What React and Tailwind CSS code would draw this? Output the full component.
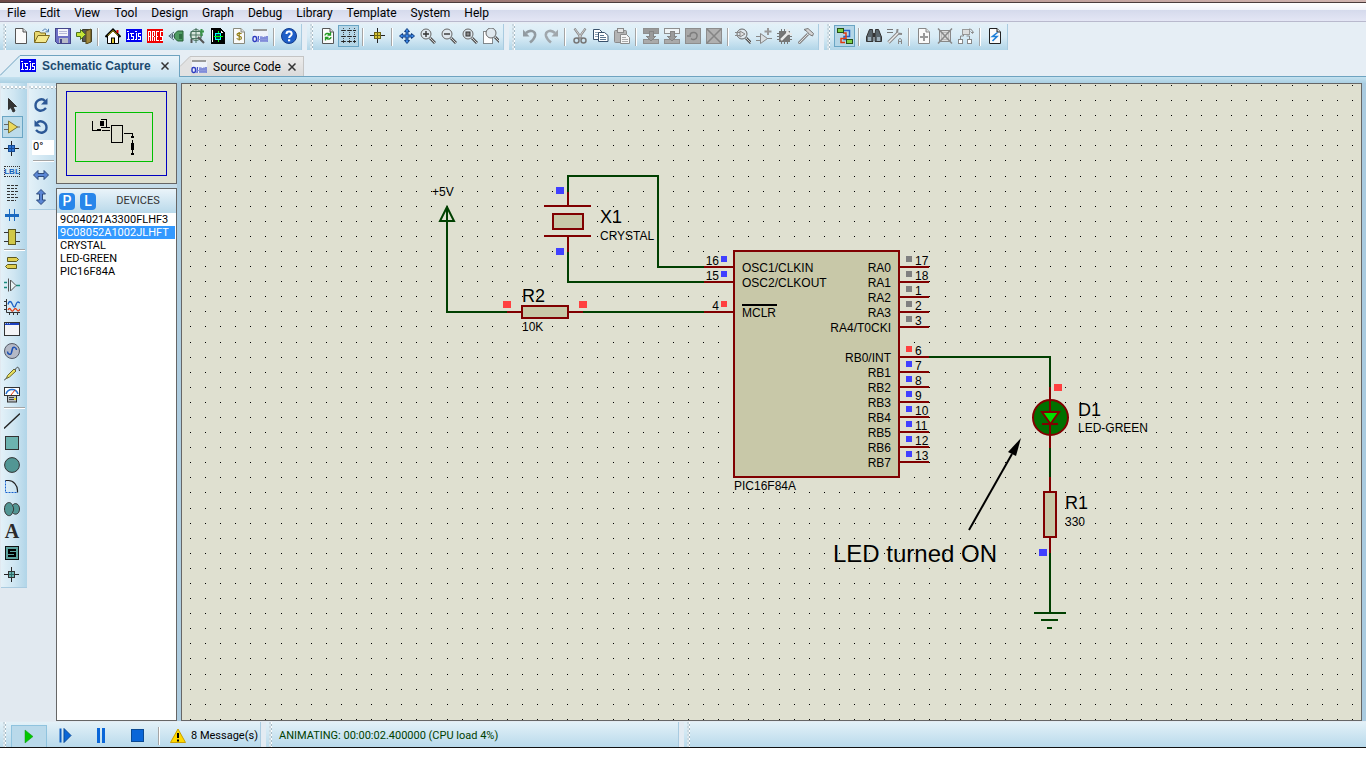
import React from 'react';
import clsx from 'clsx';

const menus = ['File', 'Edit', 'View', 'Tool', 'Design', 'Graph', 'Debug', 'Library', 'Template', 'System', 'Help'];

const Icon = ({ children, crisp, size = 16 }) => (
  <svg
    width={size}
    height={size}
    viewBox="0 0 16 16"
    fill="none"
    shapeRendering={crisp ? 'crispEdges' : undefined}
    className="shrink-0"
    aria-hidden="true"
  >
    {children}
  </svg>
);

const Page = ({ children, stroke = '#555' }) => (
  <Icon>
    <path d="M2.5 .5h7.500l3.500 3.500v11.500h-11z" fill="#fafafa" stroke={stroke} />
    <path d="M10 .5v3.500h3.500" stroke={stroke} fill="#ddd" />
    {children}
  </Icon>
);

const IsisLogo = () => (
  <Icon crisp>
    <rect y="1" width="16" height="13" fill="#0000f0" />
    <path
      d="M1 3.500h2M2.500 5v7M1 11.500h3M4 5.500h4M5.500 5v4M5 8.500h3M7.500 8v4M5 11.500h3M9 3.500h2M10.500 5v7M9 11.500h2M12 5.500h3M12.500 5v4M12 8.500h3M14.500 8v4M12 11.500h3"
      stroke="#fff"
    />
  </Icon>
);

const AresLogo = () => (
  <Icon crisp>
    <rect y="1" width="16" height="14" fill="#f00000" />
    <path
      d="M1.500 13V3M1 3.500h3M3.500 3v10M1 8.500h3M5.500 13V3M5 3.500h3M7.500 3v5M5 8.500h2M7.500 9v4M9.500 3v10M9 3.500h3M9 8.500h2M9 12.500h3M13 3.500h3M13.500 3v5M13 8.500h3M15.500 8v5M13 12.500h3"
      stroke="#fff"
    />
  </Icon>
);

const CodeIcon = () => (
  <Icon>
    <rect x="1" y="2" width="15" height="12" fill="#eef2fa" />
    <rect x="1" y="1" width="14" height="2" fill="#9a9a9a" />
    <rect x="1" y="8.500" width="3.500" height="5" rx="1.500" stroke="#2d3cc0" strokeWidth="1.400" />
    <path d="M6.500 8l-.5 6M9 8.500v5M11 9v4.500M13 8.500v5M15 8v6" stroke="#4554c8" strokeWidth="1.300" />
    <path d="M6.500 11.500h8.500M8 9h3M8 13.500h7" stroke="#8d98dc" />
  </Icon>
);

const Lens = ({ children, x = 6, y = 6 }) => (
  <g>
    <path d={`M${x + 4} ${y + 4}l5 5`} stroke="#555" strokeWidth="3" />
    <path d={`M${x + 4} ${y + 4}l5 5`} stroke="#ccc" strokeWidth="1" />
    <circle cx={x} cy={y} r="5" fill="#dfe8ee" stroke="#666" />
    {children}
  </g>
);

const fileTools = [
  { label: 'New', icon: <Page /> },
  {
    label: 'Open',
    icon: (
      <Icon>
        <path d="M.5 14V4.500l1-1h4l1 1.500h5V8" fill="#e8d870" stroke="#7c6a20" />
        <path d="M.5 14.500L4 7.500h11.500l-3.500 7z" fill="#f4e88c" stroke="#7c6a20" />
        <path d="M8.500 3c2-3 4-2 5 0M14.500 .8v3h-3" stroke="#4f7db0" />
      </Icon>
    ),
  },
  {
    label: 'Save',
    icon: (
      <Icon crisp>
        <path d="M.5 .5h15v15h-13l-2-2z" fill="#6d6fc4" stroke="#44468a" />
        <rect x="3" y="1" width="10" height="7" fill="#f4f4fa" />
        <path d="M4 3.500h8M4 5.500h8" stroke="#b7b8d8" />
        <rect x="4" y="10" width="9" height="5" fill="#b9bbc8" />
        <rect x="5" y="11" width="2" height="4" fill="#44468a" />
      </Icon>
    ),
  },
  {
    label: 'Import',
    icon: (
      <Icon>
        <path d="M6.500 1.500h9v12h-9z" fill="#555" stroke="#3c3c2c" />
        <path d="M10 3l5-2v13l-5 2z" fill="#a18a3b" stroke="#56491c" />
        <path d="M.5 4.500h4v-3l5 5-5 5v-3h-4z" fill="#c4e538" stroke="#4c7420" />
      </Icon>
    ),
  },
  'sep',
  {
    label: 'Home',
    icon: (
      <Icon>
        <path d="M2.500 8v7.500h11V8L8 3z" fill="#fff" stroke="#000" />
        <path d="M.5 9L8 1.500 15.500 9" stroke="#000" strokeWidth="2" />
        <path d="M3 7.500l5-5 5 5" stroke="#e8d020" strokeWidth="1" />
        <path d="M12.500 2v3" stroke="#d00" strokeWidth="2" />
        <rect x="6.500" y="10" width="3" height="5.500" fill="#e0c830" stroke="#000" />
      </Icon>
    ),
  },
  { label: 'Schematic Capture', icon: <IsisLogo /> },
  { label: 'PCB Layout', icon: <AresLogo /> },
  {
    label: '3D Visualizer',
    icon: (
      <Icon>
        <path d="M6.500 6l3-3h5.500v10h-5.500l-3-3z" fill="#4e9c62" stroke="#245c34" />
        <path d="M11 6h3v5h-3z" fill="#2d6f41" />
        <path d="M6 4L.8 8 6 12M2 8h5M4.500 6v4" stroke="#4f6875" />
      </Icon>
    ),
  },
  {
    label: 'Gerber Viewer',
    icon: (
      <Icon>
        <circle cx="7" cy="7" r="5.500" fill="#d7e6dd" stroke="#4a7360" />
        <path d="M7 0v15M.500 7H14M2 3.500h10v7H2z" stroke="#4a7360" />
        <path d="M12.500 1v7M11 3.500h4" stroke="#3a9448" strokeWidth="2" />
        <path d="M2.500 11v4M9 9l6 6" stroke="#555" strokeWidth="2" />
      </Icon>
    ),
  },
  {
    label: 'Design Explorer',
    icon: (
      <Icon crisp>
        <path d="M1.500 .5h9l4 4v11h-13z" fill="#000" stroke="#000" />
        <path d="M2.500 2v12" stroke="#fff" />
        <path d="M10 1v4h4z" fill="#fff" stroke="#000" />
        <rect x="5.500" y="5.500" width="5" height="6" fill="#044" stroke="#0ff" />
        <path d="M8.500 3v2M8.500 12v2M4 8.500h9" stroke="#0f0" />
      </Icon>
    ),
  },
  {
    label: 'Bill of Materials',
    icon: (
      <Page stroke="#8a8a7c">
        <path d="M10.500 6c-1-1.500-4.500-1.200-4.500.6 0 2 4.500 1.200 4.500 3.300 0 2-3.800 2-4.800.4M8.200 4v8.500" stroke="#948019" strokeWidth="1.200" />
      </Page>
    ),
  },
  { label: 'Source Code', icon: <CodeIcon /> },
  'sep',
  {
    label: 'Help',
    icon: (
      <Icon>
        <circle cx="8" cy="8" r="7.500" fill="#1f5fc8" stroke="#123c8c" />
        <path d="M5.500 6c0-3.200 5.200-3.200 5.200 0 0 1.900-2.600 1.800-2.600 4" stroke="#fff" strokeWidth="2" />
        <rect x="7" y="11.300" width="2.200" height="2" fill="#fff" />
      </Icon>
    ),
  },
];

const viewTools = [
  {
    label: 'Redraw',
    icon: (
      <Page>
        <path d="M5 7.500c0-2 3-3 5-1M10.500 4v3h-3M11 9c0 2-3 3-5 1M5.500 12.500v-3h3" stroke="#239b23" strokeWidth="1.300" />
      </Page>
    ),
  },
  {
    label: 'Toggle Grid',
    active: true,
    icon: (
      <Icon crisp>
        <path
          d="M0 2.500h16M0 8.500h16M0 13.500h16M2.500 0v16M8.500 0v16M13.500 0v16"
          stroke="#444"
          strokeDasharray="1 1"
        />
        <path d="M1 2.500h3M7 2.500h3M12 2.500h3M1 8.500h3M7 8.500h3M12 8.500h3M1 13.500h3M7 13.500h3M12 13.500h3" stroke="#222" />
      </Icon>
    ),
  },
  'sep',
  {
    label: 'Origin',
    icon: (
      <Icon crisp>
        <path d="M7.500 0v15M0 7.500h15" stroke="#222" />
        <rect x="4.500" y="4.500" width="6" height="6" fill="#d8c838" stroke="#6e6414" />
        <path d="M7.500 5v5M5 7.500h5" stroke="#6e6414" />
      </Icon>
    ),
  },
  'sep',
  {
    label: 'Pan',
    icon: (
      <Icon>
        <path
          d="M8 .5l2.500 3H9v3.500h3.500V5.500l3 2.500-3 2.500V9H9v3.500h1.500L8 15.500l-2.500-3H7V9H3.500v1.500L.5 8l3-2.500V7H7V3.500H5.500z"
          fill="#3a86e4"
          stroke="#123f80"
        />
      </Icon>
    ),
  },
  { label: 'Zoom In', icon: <Icon><Lens><path d="M3 6h6M6 3v6" stroke="#333" strokeWidth="1.400" /></Lens></Icon> },
  { label: 'Zoom Out', icon: <Icon><Lens><path d="M3 6h6" stroke="#333" strokeWidth="1.400" /></Lens></Icon> },
  { label: 'Zoom All', icon: <Icon><Lens><rect x="4" y="4" width="4" height="4" fill="#888" stroke="#333" /></Lens></Icon> },
  {
    label: 'Zoom Area',
    icon: (
      <Icon>
        <path d="M.5 3.500h9v12h-9z" fill="#fff" stroke="#222" strokeDasharray="1 1" />
        <Lens x={8} y={5} />
      </Icon>
    ),
  },
];

const Download = ({ light }) => (
  <Icon crisp>
    <rect x=".5" y=".5" width="15" height="5" fill={light ? '#eef3f5' : '#999'} stroke="#8f8f8f" />
    <rect x=".5" y="11.500" width="15" height="4" fill="#aaa" stroke="#8f8f8f" />
    <path d="M6 3h4v5h3l-5 5-5-5h3z" fill="#9a9a9a" stroke="#858585" />
  </Icon>
);

const editTools = [
  {
    label: 'Undo',
    icon: (
      <Icon>
        <path d="M4 5c4-4 10-2 9 3-.6 2.500-2.500 4.500-5 6.500" stroke="#929ba1" strokeWidth="2.600" />
        <path d="M1 1.500v7h6.500z" fill="#929ba1" />
      </Icon>
    ),
  },
  {
    label: 'Redo',
    icon: (
      <Icon>
        <path d="M12 5C8 1 2 3 3 8c.6 2.500 2.500 4.500 5 6.500" stroke="#a0a7ac" strokeWidth="2.600" />
        <path d="M15 1.500v7H8.500z" fill="#a0a7ac" />
      </Icon>
    ),
  },
  'sep',
  {
    label: 'Cut',
    icon: (
      <Icon>
        <path d="M2.500 .5L10 11M13.500 .5L6 11" stroke="#888" strokeWidth="2.200" />
        <path d="M3 1l6 8.500M13 1L7 9.500" stroke="#ddd" strokeWidth=".8" />
        <circle cx="4.500" cy="12.500" r="2.500" stroke="#777" strokeWidth="1.500" />
        <circle cx="11.500" cy="12.500" r="2.500" stroke="#777" strokeWidth="1.500" />
      </Icon>
    ),
  },
  {
    label: 'Copy',
    icon: (
      <Icon>
        <path d="M.5 1.500h6l3 3v7h-9z" fill="#fff" stroke="#39516b" />
        <path d="M2 4.500h5M2 6.500h5M2 8.500h5" stroke="#8da0b4" />
        <path d="M5.500 4.500h6l3.500 3v6h-9.500z" fill="#fff" stroke="#39516b" />
        <path d="M7 7.500h4M7 9.500h6M7 11.500h6" stroke="#5c7690" />
      </Icon>
    ),
  },
  {
    label: 'Paste',
    icon: (
      <Icon>
        <rect x=".5" y="2.500" width="12" height="12" rx="1" fill="#b4b4b4" stroke="#8a8a8a" />
        <rect x="3.500" y=".5" width="6" height="4" fill="#e4e4e4" stroke="#8a8a8a" />
        <path d="M6.500 6.500h6l3 3v6h-9z" fill="#f5f5f5" stroke="#8a8a8a" />
        <path d="M8 9.500h4M8 11.500h6M8 13.500h6" stroke="#aaa" />
      </Icon>
    ),
  },
  'sep',
  { label: 'Block Copy', icon: <Download /> },
  { label: 'Block Move', icon: <Download light /> },
  {
    label: 'Block Rotate',
    icon: (
      <Icon>
        <rect x=".5" y=".5" width="15" height="15" fill="#a8a8a8" stroke="#8d8d8d" />
        <path d="M2 8h4M5 7c1-4 8-3 7 1.500-.500 3-4 4-6 2" stroke="#7d7d7d" strokeWidth="1.500" />
      </Icon>
    ),
  },
  {
    label: 'Block Delete',
    icon: (
      <Icon>
        <rect x=".5" y=".5" width="15" height="15" fill="#b0b0b0" stroke="#8d8d8d" />
        <path d="M1 1l14 14M15 1L1 15" stroke="#858585" strokeWidth="1.500" />
      </Icon>
    ),
  },
  'sep',
  { label: 'Pick Parts', icon: <Icon><Lens x={7} y={6}><path d="M5 3v6l5-3zM0 4.500h5M0 7.500h5" fill="#ddd" stroke="#888" /></Lens></Icon> },
  {
    label: 'Make Device',
    icon: (
      <Icon>
        <path d="M4.500 5.500v10l7-5zM0 8.500h4M0 12.500h4M11 10.500h5" fill="#d9dfe2" stroke="#888" />
        <path d="M12 0v7M8.500 3.500h7" stroke="#999" strokeWidth="2" />
      </Icon>
    ),
  },
  {
    label: 'Packaging Tool',
    icon: (
      <Icon>
        <rect x="2" y="3" width="11" height="11" fill="#777" />
        <path d="M0 5.500h15M0 8.500h15M0 11.500h15M4.500 1v15M7.500 1v15M10.500 1v15" stroke="#777" />
        <path d="M4 12l7-7" stroke="#666" strokeWidth="4" />
        <path d="M4 12l8-8" stroke="#e8e8e8" strokeWidth="2.500" />
        <path d="M10.500 1l-.5 4.500 5 .5" stroke="#e8e8e8" strokeWidth="2" />
      </Icon>
    ),
  },
  {
    label: 'Decompose',
    icon: (
      <Icon>
        <path d="M.5 15.500L10 6" stroke="#888" strokeWidth="3" />
        <path d="M1 15l9-9" stroke="#ddd" />
        <path d="M6 1.500l4-1 5.500 5-1 2.500-3-1.500-2.500-3z" fill="#d4d4d4" stroke="#777" />
      </Icon>
    ),
  },
];

const designTools = [
  {
    label: 'Wire Autorouter',
    active: true,
    icon: (
      <Icon>
        <path d="M7 2.500h5.500v6H7v3h3" stroke="#2460c8" strokeWidth="1.500" />
        <path d="M8 14.500H4v-4h5V5H6" stroke="#e03a10" strokeWidth="1.500" />
        <rect x=".5" y=".5" width="6" height="4" fill="#7ed04a" stroke="#254f16" />
        <rect x="9.500" y="11.500" width="6" height="4" fill="#7ed04a" stroke="#254f16" />
      </Icon>
    ),
  },
  'sep',
  {
    label: 'Search and Tag',
    icon: (
      <Icon>
        <path d="M3.500 1.500h3L7 7v6.500H.5V9zM9.500 1.500h3l3 7.500v4.500H9V7z" fill="#59656c" stroke="#333" />
        <rect x="7" y="5" width="2" height="4" fill="#333" />
        <path d="M2 9h3v4H2zM11 9h3v4h-3z" fill="#9eb0bb" />
      </Icon>
    ),
  },
  {
    label: 'Property Assignment Tool',
    icon: (
      <Icon>
        <path d="M0 1.500h6M0 4.500h6" stroke="#777" />
        <path d="M1.500 14.500L11 5" stroke="#888" strokeWidth="3.400" />
        <path d="M10.500 1l-.5 4.500 5 .5" stroke="#888" strokeWidth="2" />
        <path d="M1.500 14.500L11 5" stroke="#eee" strokeWidth="1.400" />
        <path d="M11.500 16v-4l1-1.500h1l1 1.500v4M12 13.500h2" stroke="#888" />
      </Icon>
    ),
  },
  'sep',
  {
    label: 'New Sheet',
    icon: (
      <Page stroke="#888">
        <path d="M8 5v8M4 9h8" stroke="#999" strokeWidth="2" />
      </Page>
    ),
  },
  {
    label: 'Remove Sheet',
    icon: (
      <Icon>
        <rect x="2.500" y="2.500" width="11" height="11" fill="#ddd" stroke="#888" />
        <path d="M4.500 4.500h7v7h-7z" stroke="#999" strokeDasharray="1 1" />
        <path d="M1 .5l14 15M15 .5l-14 15" stroke="#888" strokeWidth="1.500" />
      </Icon>
    ),
  },
  {
    label: 'Exit to Parent Sheet',
    icon: (
      <Icon>
        <rect x="4.500" y="1.500" width="7" height="5" fill="#ddd" stroke="#999" />
        <rect x=".5" y="11.500" width="4" height="4" fill="#fff" stroke="#888" />
        <rect x="9.500" y="11.500" width="4" height="4" fill="#fff" stroke="#888" />
        <path d="M2.500 11V8h3V6.500M11.500 11V8h-3M11 1c3 0 4 2 3.500 4M12.500 3.500l2 2 1.500-2" stroke="#888" />
      </Icon>
    ),
  },
  'sep',
  {
    label: 'Electrical Rule Check',
    icon: (
      <Page stroke="#222">
        <path d="M10.500 4.500L5.500 8.500h4.500l-4.500 4.500" stroke="#1d7fd8" strokeWidth="1.600" />
      </Page>
    ),
  },
];

const modeTools = [
  {
    label: 'Selection Mode',
    icon: (
      <Icon>
        <path d="M4.500 1.500v11l2.500-2 2 4.500 2-1-2-4.500h3.500z" fill="#333" stroke="#333" />
      </Icon>
    ),
  },
  {
    label: 'Component Mode',
    active: true,
    icon: (
      <Icon>
        <path d="M0 5.500h4M0 10.500h4M13 8h3" stroke="#666" />
        <path d="M4.500 2v12L13.500 8z" fill="#ecd95c" stroke="#7b7337" />
      </Icon>
    ),
  },
  {
    label: 'Junction Dot Mode',
    icon: (
      <Icon crisp>
        <path d="M7.500 0v15M0 7.500h15" stroke="#222" />
        <rect x="4.500" y="4.500" width="6" height="6" fill="#2f78d8" stroke="#164a92" />
        <path d="M7.500 5v5M5 7.500h5" stroke="#164a92" />
      </Icon>
    ),
  },
  {
    label: 'Wire Label Mode',
    icon: (
      <span className="flex h-[11px] w-[16px] items-center justify-center border border-dotted border-[#333] text-[8px] leading-[9px] font-bold text-[#1460b8]">
        LBL
      </span>
    ),
  },
  {
    label: 'Text Script Mode',
    icon: (
      <Icon crisp>
        <path d="M3 .5h11M3 3.500h10M3 6.500h11M3 9.500h9M3 12.500h11M3 15.500h9" stroke="#333" strokeDasharray="3 1" />
      </Icon>
    ),
  },
  {
    label: 'Buses Mode',
    icon: (
      <Icon crisp>
        <path d="M1 8.500h14" stroke="#1a69c0" strokeWidth="3" />
        <path d="M5.500 2v12M10.500 2v12" stroke="#1a69c0" />
      </Icon>
    ),
  },
  {
    label: 'Subcircuit Mode',
    icon: (
      <Icon crisp>
        <path d="M0 3.500h4M0 12.500h4M12 3.500h4M12 12.500h4" stroke="#333" />
        <rect x="4.500" y=".5" width="7" height="15" fill="#d0c848" stroke="#5c5820" />
      </Icon>
    ),
  },
  'sep',
  {
    label: 'Terminals Mode',
    icon: (
      <Icon>
        <path d="M3.500 2.500h9l2 2-2 2h-9z" fill="#e0cf50" stroke="#5c5820" />
        <path d="M12.500 9.500h-9l-2 2 2 2h9z" fill="#e0cf50" stroke="#5c5820" />
      </Icon>
    ),
  },
  {
    label: 'Device Pins Mode',
    icon: (
      <Icon>
        <path d="M0 5.500h3M0 10.500h3M12 8.500h4" stroke="#188a7c" strokeWidth="1.300" />
        <path d="M4.500 1.500v13M6.500 3v11L12 8.500z" fill="#e9f2f5" stroke="#555" />
      </Icon>
    ),
  },
  {
    label: 'Graph Mode',
    icon: (
      <Icon>
        <path d="M2.500 0v13.500H16M0 2.500h2M0 6.500h2M0 10.500h2M5.500 14v2M9.500 14v2M13.500 14v2" stroke="#333" />
        <path d="M4 5.500c1-4 3-4 4.500 0s2.500 3 3.500 0 2-3 4-1.500" stroke="#1c61c4" strokeWidth="1.300" />
        <path d="M4 11c1-2 2-2 3 0s2 1 3-.5 2-1 3 .5 2 1 3-1" stroke="#e03a10" strokeWidth="1.300" />
      </Icon>
    ),
  },
  {
    label: 'Active Popup Mode',
    icon: (
      <Icon crisp>
        <rect x=".5" y="1.500" width="15" height="13" fill="#f4f4f6" stroke="#333" />
        <path d="M1 3h14" stroke="#1c40c0" strokeWidth="2" />
        <path d="M1 2.500h6" stroke="#9fc3f0" strokeDasharray="1 1" />
      </Icon>
    ),
  },
  {
    label: 'Generator Mode',
    icon: (
      <Icon>
        <circle cx="8" cy="8" r="7.500" fill="#b4b9c6" stroke="#555a66" />
        <path d="M3.500 8.500c0 3 3.500 4 4 1l1-4c.5-2 4-1.500 4 1.500" stroke="#1c51b4" strokeWidth="1.500" />
      </Icon>
    ),
  },
  {
    label: 'Probe Mode',
    icon: (
      <Icon>
        <path d="M0 15.500l3-3" stroke="#333" />
        <path d="M2.500 13.500l1-3L10 4l2 2-6.500 6z" fill="#e8e05c" stroke="#6a6730" />
        <path d="M11 5c2-4 4-3.500 4.500 1" stroke="#444" />
      </Icon>
    ),
  },
  {
    label: 'Virtual Instruments Mode',
    icon: (
      <Icon>
        <rect x=".5" y=".5" width="15" height="8" fill="#fff" stroke="#333" />
        <path d="M2 7c2-6 10-6 12 0" stroke="#2470d0" strokeWidth="1.500" />
        <path d="M7 8l4-5" stroke="#e03a10" />
        <rect x="3.500" y="8.500" width="9" height="6.500" fill="#b9bec2" stroke="#333" />
        <path d="M5 10.500h5M5 12.500h5" stroke="#444" />
        <rect x="10" y="11" width="2" height="2" fill="#f0e020" />
      </Icon>
    ),
  },
  'sep',
  { label: 'Line Mode', icon: <Icon><path d="M0 15.500L16 .5" stroke="#222" strokeWidth="1.300" /></Icon> },
  {
    label: 'Box Mode',
    icon: <Icon crisp><rect x="1.500" y="1.500" width="13" height="13" fill="#6cb3b0" stroke="#333" /></Icon>,
  },
  { label: 'Circle Mode', icon: <Icon><circle cx="8" cy="8" r="7.400" fill="#529694" stroke="#333" /></Icon> },
  {
    label: 'Arc Mode',
    icon: (
      <Icon>
        <path d="M1.500 1.500v12h12" stroke="#1460d0" strokeDasharray="2 1" />
        <path d="M1.500 1.500h3c5 0 9 5 9 10v2" stroke="#222" strokeWidth="1.200" />
      </Icon>
    ),
  },
  {
    label: 'Closed Path Mode',
    icon: (
      <Icon>
        <path
          d="M8.500 4.500C7-.5.5 1 .5 8s6.500 9 8 3.500c2 3 7 2 7-3.500s-5-7-7-3.500z"
          fill="#529694"
          stroke="#333"
        />
        <path d="M8.500 4.500c1.500 2 1.500 5 0 7" stroke="#333" />
      </Icon>
    ),
  },
  {
    label: 'Text Mode',
    icon: (
      <span className="w-[16px] text-center font-['Liberation_Serif',serif] text-[20px] leading-[20px] font-bold text-[#2b2b2b]">
        A
      </span>
    ),
  },
  {
    label: 'Symbols Mode',
    icon: (
      <Icon crisp>
        <rect x="1.500" y="1.500" width="13" height="13" fill="#5ca39f" stroke="#111" />
        <path d="M12 5H5v3h6v3H4" stroke="#000" strokeWidth="2" />
      </Icon>
    ),
  },
  {
    label: 'Markers Mode',
    icon: (
      <Icon crisp>
        <path d="M7.500 0v15M0 7.500h15" stroke="#222" />
        <rect x="4.500" y="4.500" width="6" height="6" fill="#6cb3b0" stroke="#333" />
        <path d="M7.500 5v5M5 7.500h5" stroke="#2c6d6a" />
      </Icon>
    ),
  },
];

const devices = ['9C04021A3300FLHF3', '9C08052A1002JLHFT', 'CRYSTAL', 'LED-GREEN', 'PIC16F84A'];

const Grip = ({ horizontal }) => (
  <span
    className={clsx(
      'block shrink-0 self-stretch bg-[conic-gradient(at_2px_2px,#fff_0_25%,#a9bcc6_25%_50%,#dbe8ef_50%_75%,#c9d8e0_75%)]',
      horizontal ? 'h-[3px] bg-[length:4px_4px]' : 'w-[3px] bg-[length:4px_4px]'
    )}
  />
);

const ToolGroup = ({ label, tools }) => (
  <div
    role="toolbar"
    aria-label={label}
    className="flex h-[26px] items-center border-r border-[#a9cbe0] bg-linear-to-b from-[#e3f1f8] via-[#d8ebf5] to-[#b1d5e8] pr-[2px]"
  >
    <div className="flex w-[10px] self-stretch pl-[3px]">
      <Grip />
    </div>
    {tools.map((tool, i) =>
      tool === 'sep' ? (
        <span key={i} className="flex w-[8px] justify-center">
          <span className="h-[18px] w-[2px] border-r border-white bg-[#a5a5a5]" />
        </span>
      ) : (
        <button
          key={tool.label}
          type="button"
          title={tool.label}
          aria-label={tool.label}
          className={clsx(
            'mb-[2px] flex h-[22px] w-[21px] items-center',
            tool.active ? 'border border-[#6aa5c4] bg-[#b5d6e7] pl-[2px]' : 'pl-[3px]'
          )}
        >
          {tool.icon}
        </button>
      )
    )}
  </div>
);

const Tab = ({ active, icon, label }) => (
  <div className="flex">
    <svg
      width={active ? 20 : 11}
      height="22"
      viewBox={active ? '0 0 20 22' : '0 0 11 22'}
      aria-hidden="true"
    >
      {active ? (
        <>
          <path d="M0 20.500L20 0v22H0z" fill="#dcedf6" />
          <path d="M0 20.500L20 .5" stroke="#6ea3c0" fill="none" />
        </>
      ) : (
        <>
          <path d="M0 11L10 1h1v20H0z" fill="#e2e2e2" />
          <path d="M0 11.500L10 1.500h1" stroke="#c4c4c4" fill="none" />
        </>
      )}
    </svg>
    <div
      className={clsx(
        'flex items-center border-t border-r',
        active
          ? 'h-[22px] w-[160px] border-[#6ea3c0] bg-linear-to-b from-[#e8f3fa] to-[#c9e2f0] pb-[2px]'
          : 'mt-px h-[20px] w-[113px] border-[#c4c4c4] bg-linear-to-b from-[#ececec] to-[#dadada]'
      )}
    >
      <button
        type="button"
        role="tab"
        aria-selected={!!active}
        className={clsx(
          'flex flex-1 items-center gap-[6px] whitespace-nowrap',
          active ? 'text-[12px] font-bold text-[#1d4a6f]' : "font-['Roboto',sans-serif] text-[12px] text-black"
        )}
      >
        {icon}
        {label}
      </button>
      <button type="button" aria-label={`Close ${label}`} className="h-[16px] w-[28px]">
        <svg width="8" height="8" viewBox="0 0 8 8" className="mx-auto" aria-hidden="true">
          <path d="M.5 .5l7 7M7.500 .5l-7 7" stroke="#333" strokeWidth="1.500" />
        </svg>
      </button>
    </div>
  </div>
);

const ModeBar = () => (
  <div
    role="toolbar"
    aria-label="Modes"
    aria-orientation="vertical"
    className="flex w-[26px] flex-col self-start border-b border-[#a9cbe0] bg-linear-to-r from-[#e3f1f8] via-[#cfe6f2] to-[#b1d5e8] pb-[1px]"
  >
    <div className="flex h-[11px] flex-col pt-[3px]">
      <Grip horizontal />
    </div>
    {modeTools.map((tool, i) =>
      tool === 'sep' ? (
        <span key={i} className="flex h-[4px] items-center pl-[3px]">
          <span className="h-[2px] w-[21px] border-b border-white bg-[#a5a5a5]" />
        </span>
      ) : (
        <button
          key={tool.label}
          type="button"
          title={tool.label}
          aria-label={tool.label}
          className={clsx(
            'flex h-[22px] w-[21px] items-center',
            tool.active ? 'ml-px border border-[#6aa5c4] bg-[#bcdbea] pl-px' : 'pl-[3px]'
          )}
        >
          {tool.icon}
        </button>
      )
    )}
  </div>
);

const RotateIcon = ({ flipped }) => (
  <Icon>
    <g transform={flipped ? 'translate(16 0) scale(-1 1)' : undefined}>
      <path d="M12 4C9 .5 2.500 3 2.500 8.500S9 15.500 13 11" stroke="#2c5896" strokeWidth="2.400" />
      <path d="M14.500 1v6.500H8z" fill="#2c5896" />
    </g>
  </Icon>
);

const OrientationBar = () => (
  <div
    role="toolbar"
    aria-label="Orientation"
    aria-orientation="vertical"
    className="flex w-[27px] flex-col self-start border-b border-[#a9cbe0] bg-linear-to-r from-[#e3f1f8] to-[#c4dfee] pb-[1px]"
  >
    <div className="flex h-[11px] flex-col pt-[3px]">
      <Grip horizontal />
    </div>
    <button type="button" aria-label="Rotate Clockwise" className="flex h-[22px] w-[24px] items-center justify-center">
      <RotateIcon />
    </button>
    <button type="button" aria-label="Rotate Anti-Clockwise" className="flex h-[22px] w-[24px] items-center justify-center">
      <RotateIcon flipped />
    </button>
    <input
      aria-label="Rotation angle"
      defaultValue="0°"
      className="mt-[2px] ml-[3px] h-[15px] w-[22px] bg-white pl-px font-['Roboto',sans-serif] text-[11px] text-black"
    />
    <span className="mt-[5px] ml-[4px] h-[2px] w-[21px] border-b border-white bg-[#a5a5a5]" />
    <button type="button" aria-label="X-Mirror" className="mt-[2px] flex h-[22px] w-[24px] items-center justify-center">
      <Icon>
        <path d="M.5 8L5 3.500V6.500h6V3.500L15.500 8 11 12.500V9.500H5V12.500z" fill="#5a86d4" stroke="#2c4a7c" />
      </Icon>
    </button>
    <button type="button" aria-label="Y-Mirror" className="flex h-[22px] w-[24px] items-center justify-center">
      <Icon>
        <path d="M8 .5L3.500 5H6.500v6H3.500L8 15.500 12.500 11H9.500V5H12.500z" fill="#5a86d4" stroke="#2c4a7c" />
      </Icon>
    </button>
  </div>
);

const Overview = () => (
  <div className="h-[101px] border border-[#666] bg-[#dfe0d0]">
    <svg width="119" height="99" viewBox="57 84 119 99" fill="none" shapeRendering="crispEdges" aria-label="Sheet overview">
      <rect x="66.500" y="91.500" width="100" height="84" stroke="#0000c0" />
      <rect x="75.500" y="112.500" width="77" height="49" stroke="#00c000" />
      <path
        d="M92.500 121v9.500M92 130.500h9M100.500 119.500h6v7M101 127.500h9M102 130.500h8M124 133.500h8.500v4M132.500 140v4M132.500 145v10"
        stroke="#000"
      />
      <path d="M100 121h4v5h-4zM131 136h3v2h-3zM131 143h3v7h-3zM97 129h4v2h-4zM131 153h3v2h-3z" fill="#000" />
      <rect x="111.500" y="125.500" width="11" height="17" stroke="#000" />
    </svg>
  </div>
);

const DevicePanel = () => (
  <section
    className="flex flex-1 flex-col border border-[#666] bg-white font-['Roboto',sans-serif] text-[11px]"
    aria-label="Devices"
  >
    <header className="flex h-[24px] items-center bg-linear-to-b from-[#eaf4fa] to-[#b9d9ea] pl-[2px]">
      <button type="button" className="h-[17px] w-[16px] rounded-[4px] bg-[#2886ea] text-[14px] leading-[17px] font-medium text-white">
        P
      </button>
      <button type="button" className="ml-[5px] h-[17px] w-[16px] rounded-[4px] bg-[#2886ea] text-[14px] leading-[17px] font-medium text-white">
        L
      </button>
      <h2 className="flex-1 pl-[4px] text-center text-[#333]">DEVICES</h2>
    </header>
    <ul role="listbox" aria-label="Devices" className="px-[1px] leading-[13px] text-black">
      {devices.map((name, i) => (
        <li
          key={name}
          role="option"
          aria-selected={i === 1}
          className={clsx('pl-[2px] whitespace-nowrap', i === 1 && 'bg-[#3399ff] text-white')}
        >
          {name}
        </li>
      ))}
    </ul>
  </section>
);

const GRID = 15.09;

const gridDots = () => {
  let d = '';
  for (let row = 0; row < 90; row++) {
    for (let col = 0; col < 170; col++) {
      d += `M${190 + Math.round(col * GRID)} ${85 + Math.round(row * GRID)}h1v1h-1z`;
    }
  }
  return d;
};

const levels = { high: '#ff4040', low: '#4040ff', float: '#808080' };

const leftPins = [
  { y: 267, number: '16', name: 'OSC1/CLKIN', level: 'low' },
  { y: 282, number: '15', name: 'OSC2/CLKOUT', level: 'low' },
  { y: 312, number: '4', name: 'MCLR', level: 'high' },
];

const rightPins = [
  { y: 267, number: '17', name: 'RA0', level: 'float' },
  { y: 282, number: '18', name: 'RA1', level: 'float' },
  { y: 297, number: '1', name: 'RA2', level: 'float' },
  { y: 312, number: '2', name: 'RA3', level: 'float' },
  { y: 327, number: '3', name: 'RA4/T0CKI', level: 'float' },
  { y: 357, number: '6', name: 'RB0/INT', level: 'high' },
  { y: 372, number: '7', name: 'RB1', level: 'low' },
  { y: 387, number: '8', name: 'RB2', level: 'low' },
  { y: 402, number: '9', name: 'RB3', level: 'low' },
  { y: 417, number: '10', name: 'RB4', level: 'low' },
  { y: 432, number: '11', name: 'RB5', level: 'low' },
  { y: 447, number: '12', name: 'RB6', level: 'low' },
  { y: 462, number: '13', name: 'RB7', level: 'low' },
];

const probes = [
  { x: 556, y: 187, level: 'low' },
  { x: 556, y: 248, level: 'low' },
  { x: 503, y: 301, level: 'high' },
  { x: 579, y: 301, level: 'high' },
  { x: 1054, y: 384, level: 'high' },
  { x: 1039, y: 549, level: 'low' },
];

const Schematic = () => (
  <svg className="block h-full w-full" role="img" aria-label="PIC16F84A LED circuit">
    <g transform="translate(-182 -84)" fill="none" strokeWidth="2">
      <path d={gridDots()} fill="#000" shapeRendering="crispEdges" />

      {/* wires */}
      <path
        d="M447 208v104h60M583 312h121M568 192v-16h90v91h46M568 252v30h136M929 357h121v30M1050 448v29M1050 553v60M1034 613h32M1041 620h17M1047 628h5M447 207l-7 14h14z"
        stroke="#004000"
      />

      {/* component bodies and pins */}
      <g stroke="#800000">
        <path d="M507 312h14M568 312h15M568 192v14M544 206h47M544 236h47M568 236v16M1050 477v14M1050 538v15" />
        <rect x="522" y="306" width="46" height="12" fill="#c8c8a8" />
        <rect x="553" y="214" width="30" height="15" fill="#c8c8a8" />
        <rect x="1044" y="492" width="12" height="45" fill="#c8c8a8" />
        <rect x="734" y="251" width="165" height="226" fill="#c8c8a8" />
        <circle cx="1050.500" cy="417.500" r="17.500" fill="#007000" />
        <path d="M1050 387v61" />
        <path d="M1042 412h17l-8.500 12z" fill="#00e000" />
        <path d="M1042 424h16" />
      </g>

      <g className="font-['Liberation_Sans',Arial,sans-serif] text-[12px]" fill="#000">
        {leftPins.map(({ y, number, name, level }) => (
          <g key={number}>
            <path d={`M704 ${y}h30`} stroke="#800000" />
            <rect x="721" y={y - 11} width="6" height="6" fill={levels[level]} />
            <text x="719" y={y - 2} textAnchor="end">{number}</text>
            <text x="742" y={y + 5}>{name}</text>
          </g>
        ))}
        <path d="M742 305h35" stroke="#000" />
        {rightPins.map(({ y, number, name, level }) => (
          <g key={number}>
            <path d={`M899 ${y}h30`} stroke="#800000" />
            <rect x="906" y={y - 11} width="6" height="6" fill={levels[level]} />
            <text x="915" y={y - 2}>{number}</text>
            <text x="891" y={y + 5} textAnchor="end">{name}</text>
          </g>
        ))}
        <text x="432" y="196">+5V</text>
        <text x="600" y="240">CRYSTAL</text>
        <text x="522" y="331">10K</text>
        <text x="734" y="490">PIC16F84A</text>
        <text x="1078" y="432">LED-GREEN</text>
        <text x="1065" y="526">330</text>
      </g>

      <g className="font-['Liberation_Sans',Arial,sans-serif] text-[18px]" fill="#000">
        <text x="600" y="223">X1</text>
        <text x="522" y="302">R2</text>
        <text x="1078" y="416">D1</text>
        <text x="1065" y="509">R1</text>
      </g>

      {probes.map(({ x, y, level }) => (
        <rect key={`${x}-${y}`} x={x} y={y} width="8" height="7" fill={levels[level]} />
      ))}

      <path d="M969 530l43-76" stroke="#000" />
      <path d="M1021 438l-13 14 8 4z" fill="#000" />
      <text x="833" y="562" fill="#000" className="font-['Liberation_Sans',Arial,sans-serif] text-[24px]">
        LED turned ON
      </text>
    </g>
  </svg>
);

const SimButton = ({ label, active, children }) => (
  <button
    type="button"
    title={label}
    aria-label={label}
    className={clsx(
      'flex h-[22px] w-[36px] items-center justify-center',
      active && 'border border-b-0 border-[#8fc3de] bg-[#b9d9ea]'
    )}
  >
    {children}
  </button>
);

const StatusBar = () => (
  <footer className="flex h-[26px] shrink-0 gap-[5px] bg-[#e3ebf2] pt-px font-['Roboto',sans-serif] text-[11px] text-black">
    <div className="flex items-end border-r border-[#a9cbe0] bg-linear-to-b from-[#e3f1f8] to-[#b9daeb]">
      <div className="flex w-[11px] self-stretch pl-[3px]">
        <Grip />
      </div>
      <SimButton label="Run the simulation" active>
        <Icon><path d="M4 1v13L12 7.500z" fill="#00c800" stroke="#159015" strokeWidth=".5" /></Icon>
      </SimButton>
      <SimButton label="Advance the simulation">
        <Icon>
          <path d="M3.500 .5v14" stroke="#0a5cc4" strokeWidth="2" />
          <path d="M7 .5v14l7-7z" fill="#0a66d8" stroke="#0a4a94" />
        </Icon>
      </SimButton>
      <SimButton label="Pause the simulation">
        <Icon crisp><path d="M5.500 0v15M10.500 0v15" stroke="#0a66d8" strokeWidth="3" /></Icon>
      </SimButton>
      <SimButton label="Stop the simulation">
        <Icon crisp><rect x="2.500" y="1.500" width="12" height="12" fill="#0a66d8" stroke="#0a4a94" /></Icon>
      </SimButton>
      <span className="mx-[3px] mb-[2px] h-[18px] w-[2px] border-r border-white bg-[#a5a5a5]" />
      <button type="button" className="flex h-[22px] items-center gap-[5px] pr-[2px] pl-[7px] whitespace-nowrap">
        <Icon>
          <path d="M8 1l7.500 13.500H.5z" fill="#ffd800" stroke="#c8a000" />
          <path d="M8 5v5M8 11.500v2" stroke="#000" strokeWidth="2" />
        </Icon>
        8 Message(s)
      </button>
    </div>
    <div className="flex w-[413px] items-end border-r border-[#a9cbe0] bg-linear-to-b from-[#e3f1f8] to-[#b9daeb]">
      <div className="flex w-[13px] self-stretch pl-[3px]">
        <Grip />
      </div>
      <output className="leading-[22px] whitespace-nowrap text-[#004000]">ANIMATING: 00:00:02.400000 (CPU load 4%)</output>
    </div>
    <div className="flex flex-1 bg-linear-to-b from-[#e3f1f8] to-[#b9daeb] pl-[3px]">
      <Grip />
    </div>
  </footer>
);

const App = () => (
  <div className="flex h-screen flex-col overflow-hidden bg-white font-['Liberation_Sans',Arial,sans-serif]">
    <div className="h-[3px] shrink-0 border-b border-[#4a3c3c] bg-linear-to-r from-[#6e4a48] via-[#b08c88] to-[#d0b4b0]" />
    <nav className="h-[19px] shrink-0 border-b border-[#b9b9cd] bg-[linear-gradient(#fff_0,#f1f3fa_7px,#d5daec_7px,#e4e6f5_100%)]">
      <ul className="flex font-['Roboto',sans-serif] text-[12px] leading-[20px] text-black">
        {menus.map((name) => (
          <li key={name}>
            <button type="button" className="px-[7px]">{name}</button>
          </li>
        ))}
      </ul>
    </nav>

    <div className="flex h-[33px] shrink-0 gap-[5px] bg-[#e6eef5] pt-[2px]">
      <ToolGroup label="File" tools={fileTools} />
      <ToolGroup label="View" tools={viewTools} />
      <ToolGroup label="Edit" tools={editTools} />
      <ToolGroup label="Design" tools={designTools} />
    </div>

    <div role="tablist" className="flex h-[22px] shrink-0 bg-[#e6eef5] shadow-[inset_0_-1px_#6ea3c0]">
      <Tab active icon={<IsisLogo />} label="Schematic Capture" />
      <Tab icon={<CodeIcon />} label="Source Code" />
    </div>
    <div className="h-[6px] shrink-0 bg-linear-to-b from-[#c3e1ef] to-[#abd0e3]" />

    <div className="flex min-h-0 flex-1 bg-[#e1e9f0]">
      <div className="flex w-[56px] shrink-0 gap-[2px] pl-[1px]">
        <ModeBar />
        <OrientationBar />
      </div>
      <aside className="flex w-[121px] shrink-0 flex-col gap-[4px] bg-[#c5dcea]">
        <Overview />
        <DevicePanel />
      </aside>
      <div className="w-[4px] shrink-0 bg-[#aecde0]" />
      <main className="min-w-0 flex-1 border border-[#666] bg-[#dfe0d0]">
        <Schematic />
      </main>
      <div className="w-[4px] shrink-0 bg-[#a9cbe0]" />
    </div>

    <StatusBar />
    <div className="h-[21px] shrink-0 border-t border-[#111] bg-white" />
  </div>
);

export default App;
